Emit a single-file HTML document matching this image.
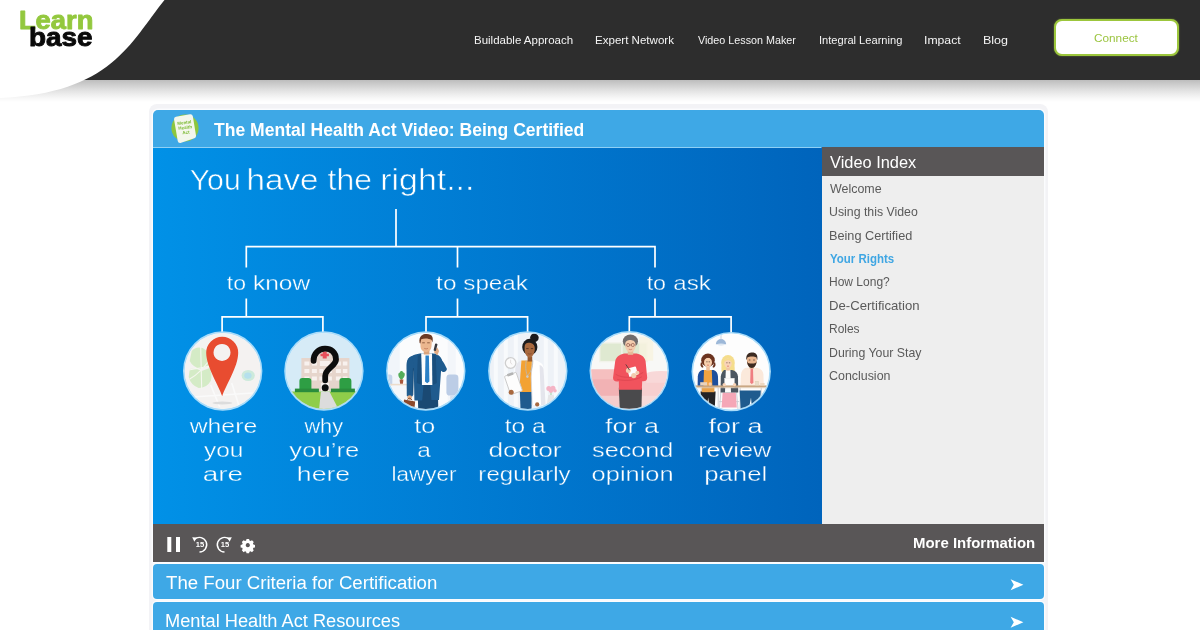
<!DOCTYPE html>
<html lang="en">
<head>
<meta charset="utf-8">
<title>Learnbase – The Mental Health Act Video: Being Certified</title>
<style>
html,body{margin:0;padding:0}
body{position:relative;width:1200px;height:630px;overflow:hidden;background:#fff;font-family:"Liberation Sans",sans-serif}
.t{position:absolute;display:block;margin:0;padding:0;white-space:nowrap;line-height:1;transform-origin:0 0;letter-spacing:0;text-decoration:none;list-style:none}
ul{margin:0;padding:0;list-style:none}
header{position:absolute;left:0;top:0;width:1200px;height:80px;background:#2d2d2d}
.hshadow{position:absolute;left:0;top:80px;width:1200px;height:22px;background:linear-gradient(to bottom,#bdbdbd 0,#cfcfcf 23%,#e0e0e0 45%,#efefef 68%,#f8f8f8 84%,#fff 100%)}
.logo{position:absolute;left:0;top:0;width:220px;height:120px}
.connect{position:absolute;left:1054px;top:19px;width:121px;height:33px;border:2px solid #9cc63c;border-radius:8px;background:#fff;box-shadow:0 0 1.5px rgba(156,198,60,.7)}
.card{position:absolute;left:149px;top:104px;width:899px;height:560px;border-radius:8px;background:#f3f3f6}
.inner{position:absolute;left:153px;top:109.5px;width:891px;height:452.3px;border-radius:5px 5px 0 0;box-shadow:0 0 0 1.4px #fbfcfe}
.titlebar{position:absolute;left:153px;top:109.5px;width:891px;height:38.5px;background:#3ea8e6;border-radius:5px 5px 0 0}
.slide{position:absolute;left:153px;top:147px;width:669px;height:377px}
.side{position:absolute;left:821.5px;top:147px;width:222.5px;height:377px;background:#eeeeee}
.sidehead{position:absolute;left:0;top:0;width:100%;height:29px;background:#595657}
.ctrl{position:absolute;left:153px;top:524px;width:891px;height:38px;background:#595657}
.acc{position:absolute;left:153px;width:891px;height:35px;background:#3ea8e6;border-radius:4px;box-shadow:0 0 0 1.4px #fbfcfe}
.a1{top:564.3px}.a2{top:602.3px}
.ico{position:absolute}
/* own compositing layer => consistent greyscale text antialiasing */
#page{position:absolute;left:0;top:0;width:1200px;height:630px;overflow:hidden;will-change:transform}
</style>
</head>
<body>
<div id="page">

<!-- ============ site header ============ -->
<header>
  <nav>
    <a class="t nav" href="#" style="left:474.08px;top:34.08px;font-size:11.6px;font-weight:400;color:#f4f4f4;transform:scaleX(0.9918)">Buildable Approach</a>
    <a class="t nav" href="#" style="left:595.48px;top:34.08px;font-size:11.6px;font-weight:400;color:#f4f4f4;transform:scaleX(0.9960)">Expert Network</a>
    <a class="t nav" href="#" style="left:698.35px;top:34.08px;font-size:11.6px;font-weight:400;color:#f4f4f4;transform:scaleX(0.9276)">Video Lesson Maker</a>
    <a class="t nav" href="#" style="left:819.00px;top:34.08px;font-size:11.6px;font-weight:400;color:#f4f4f4;transform:scaleX(0.9576)">Integral Learning</a>
    <a class="t nav" href="#" style="left:923.90px;top:34.08px;font-size:11.6px;font-weight:400;color:#f4f4f4;transform:scaleX(1.0539)">Impact</a>
    <a class="t nav" href="#" style="left:982.80px;top:34.08px;font-size:11.6px;font-weight:400;color:#f4f4f4;transform:scaleX(1.0781)">Blog</a>
  </nav>
  <a class="connect" href="#" aria-label="Connect"></a>
  <span class="t btn" style="left:1094.21px;top:32.66px;font-size:10.8px;font-weight:400;color:#9bc43f;transform:scaleX(1.0916)">Connect</span>
</header>
<div class="hshadow"></div>

<svg class="logo" viewBox="0 0 220 120" aria-label="Learnbase">
  <path d="M0,0 H164.5 C130,42.7 111.4,93.3 0,98 Z" fill="#fff"/>
  <g font-family="Liberation Sans, sans-serif" font-weight="700" font-size="25.8" stroke-width="0.9" stroke-linejoin="round" opacity="0.999">
    <text x="18.9" y="29.1" fill="#93c83e" stroke="#93c83e" textLength="74.6" lengthAdjust="spacingAndGlyphs">Learn</text>
    <text x="29.0" y="45.6" fill="#0a0a0a" stroke="#0a0a0a" textLength="63.6" lengthAdjust="spacingAndGlyphs">base</text>
  </g>
</svg>

<!-- ============ lesson card ============ -->
<main>
<div class="card"></div>
<div class="inner"></div>
<div class="titlebar"></div>
<h1 class="t ttl" style="left:214.12px;top:121.16px;font-size:18px;font-weight:700;color:#ffffff;transform:scaleX(0.9743)">The Mental Health Act Video: Being Certified</h1>

<!-- title icon -->
<svg class="ico" style="left:170px;top:113px" width="30" height="30" viewBox="-15 -15 30 30">
  <circle r="13.6" fill="#8cc63f"/>
  <g transform="rotate(-7)">
    <path d="M-7.6,-12.2 L6.6,-13 Q9,-13 9.2,-10.6 L10,8.6 Q10.1,10.8 8,11.4 L-5.6,14.2 Q-8.6,14.6 -8.8,12 L-9.8,-9.6 Q-9.9,-12 -7.6,-12.2 Z" fill="#f4f7ec"/>
    <g font-family="Liberation Sans, sans-serif" font-size="4.5" font-weight="700" fill="#7dba35" text-anchor="middle" opacity="0.999">
      <text x="0" y="-4">Mental</text><text x="0.2" y="1">Health</text><text x="0.4" y="6">Act</text>
    </g>
  </g>
</svg>

<!-- video slide -->
<svg class="slide" viewBox="153 147 669 377" font-family="Liberation Sans, sans-serif">
  <defs>
    <linearGradient id="bg" gradientUnits="userSpaceOnUse" x1="153" y1="0" x2="822" y2="0">
      <stop offset="0" stop-color="#0191e7"/>
      <stop offset="1" stop-color="#0064bc"/>
    </linearGradient>
    <clipPath id="cc"><circle r="38.0"/></clipPath>
  </defs>
  <rect x="153" y="147" width="669" height="378" fill="url(#bg)"/>
  <rect x="153" y="147" width="668.5" height="1" fill="#8fd0f5"/>
<path d="M396,209 V246.6 M246.3,267.5 V246.6 H655.0 V267.5 M457.5,246.6 V267.5 M246.3,298.5 V316.9 M222.1,333 V316.9 H322.9 V333 M457.5,298.5 V316.9 M426.0,333 V316.9 H527.6 V333 M655.0,298.5 V316.9 M629.3,333 V316.9 H731.1 V333" fill="none" stroke="#fff" stroke-width="1.7" stroke-linejoin="miter"/>
  <!-- slide text: stroke is painted with the background gradient to slim the glyphs -->
  <g fill="#fff" stroke="url(#bg)" stroke-linejoin="round">
<text x="189.74" y="190.00" font-size="29.5" stroke-width="0.55" textLength="51.00" lengthAdjust="spacingAndGlyphs">You</text>
<text x="246.47" y="190.00" font-size="29.5" stroke-width="0.55" textLength="72.14" lengthAdjust="spacingAndGlyphs">have</text>
<text x="327.52" y="190.00" font-size="29.5" stroke-width="0.55" textLength="44.42" lengthAdjust="spacingAndGlyphs">the</text>
<text x="380.30" y="190.00" font-size="29.5" stroke-width="0.55" textLength="94.08" lengthAdjust="spacingAndGlyphs">right...</text>
<text x="226.85" y="290.40" font-size="21" stroke-width="0.34" textLength="19.25" lengthAdjust="spacingAndGlyphs">to</text>
<text x="253.01" y="290.40" font-size="21" stroke-width="0.34" textLength="57.18" lengthAdjust="spacingAndGlyphs">know</text>
<text x="436.13" y="290.40" font-size="21" stroke-width="0.34" textLength="20.31" lengthAdjust="spacingAndGlyphs">to</text>
<text x="463.27" y="290.40" font-size="21" stroke-width="0.34" textLength="64.69" lengthAdjust="spacingAndGlyphs">speak</text>
<text x="646.65" y="290.40" font-size="21" stroke-width="0.34" textLength="19.46" lengthAdjust="spacingAndGlyphs">to</text>
<text x="673.23" y="290.40" font-size="21" stroke-width="0.34" textLength="37.59" lengthAdjust="spacingAndGlyphs">ask</text>
<text x="189.65" y="432.60" font-size="20.5" stroke-width="0.34" textLength="67.59" lengthAdjust="spacingAndGlyphs">where</text>
<text x="203.93" y="456.60" font-size="20.5" stroke-width="0.34" textLength="39.47" lengthAdjust="spacingAndGlyphs">you</text>
<text x="202.78" y="480.80" font-size="20.5" stroke-width="0.34" textLength="40.39" lengthAdjust="spacingAndGlyphs">are</text>
<text x="304.40" y="432.60" font-size="20.5" stroke-width="0.34" textLength="38.76" lengthAdjust="spacingAndGlyphs">why</text>
<text x="289.37" y="456.60" font-size="20.5" stroke-width="0.34" textLength="69.85" lengthAdjust="spacingAndGlyphs">you’re</text>
<text x="296.84" y="480.80" font-size="20.5" stroke-width="0.34" textLength="53.30" lengthAdjust="spacingAndGlyphs">here</text>
<text x="414.32" y="432.60" font-size="20.5" stroke-width="0.34" textLength="20.96" lengthAdjust="spacingAndGlyphs">to</text>
<text x="417.22" y="456.60" font-size="20.5" stroke-width="0.34" textLength="13.61" lengthAdjust="spacingAndGlyphs">a</text>
<text x="391.54" y="480.80" font-size="20.5" stroke-width="0.34" textLength="64.90" lengthAdjust="spacingAndGlyphs">lawyer</text>
<text x="504.78" y="432.60" font-size="20.5" stroke-width="0.34" textLength="40.74" lengthAdjust="spacingAndGlyphs">to a</text>
<text x="488.40" y="456.60" font-size="20.5" stroke-width="0.34" textLength="73.26" lengthAdjust="spacingAndGlyphs">doctor</text>
<text x="478.39" y="480.80" font-size="20.5" stroke-width="0.34" textLength="92.27" lengthAdjust="spacingAndGlyphs">regularly</text>
<text x="605.04" y="432.60" font-size="20.5" stroke-width="0.34" textLength="54.13" lengthAdjust="spacingAndGlyphs">for a</text>
<text x="592.14" y="456.60" font-size="20.5" stroke-width="0.34" textLength="81.18" lengthAdjust="spacingAndGlyphs">second</text>
<text x="591.63" y="480.80" font-size="20.5" stroke-width="0.34" textLength="81.97" lengthAdjust="spacingAndGlyphs">opinion</text>
<text x="708.44" y="432.60" font-size="20.5" stroke-width="0.34" textLength="54.13" lengthAdjust="spacingAndGlyphs">for a</text>
<text x="698.20" y="456.60" font-size="20.5" stroke-width="0.34" textLength="73.21" lengthAdjust="spacingAndGlyphs">review</text>
<text x="704.28" y="480.80" font-size="20.5" stroke-width="0.34" textLength="62.89" lengthAdjust="spacingAndGlyphs">panel</text>
  </g>
<g transform="translate(222.7,371.0)">
<circle r="39.7" fill="#a9dcfa"/>
<g clip-path="url(#cc)">
<circle r="38.0" fill="#fff"/>
<!-- map pin -->
<circle r="39" fill="#f4f2f1"/>
<g fill="#d4ebc6">
  <path d="M-31,-20 Q-27,-25 -20,-23 L-13,-18 Q-11,-12 -13,-6 L-22,-2 Q-30,-4 -33,-10 Z"/>
  <path d="M-33,-2 Q-27,-3 -21,0 L-13,-3 Q-10,4 -12,10 Q-16,17 -24,17 Q-32,14 -34,6 Z"/>
</g>
<path d="M-34,-1 L-12,-5 M-22,-24 L-21,18 M-33,8 Q-22,2 -11,-14" fill="none" stroke="#f5f7ef" stroke-width="1.1"/>
<ellipse cx="25.5" cy="4.5" rx="6.6" ry="5.6" fill="#cdeadb"/>
<ellipse cx="25.2" cy="4.6" rx="3.7" ry="3.2" fill="#b5e0ec"/>
<path d="M-12,14 L-3,36 M9,12 L16,34 M-30,26 L30,22" fill="none" stroke="#fafafa" stroke-width="1.6"/>
<ellipse cx="-0.3" cy="32" rx="10" ry="1.5" fill="#dcdcdc"/>
<path fill="#e84c30" fill-rule="evenodd" d="M-0.5,25.2 C-3.5,15 -16.5,-4 -16.5,-18.3 A16,16 0 0 1 15.5,-18.3 C15.5,-4 2.5,15 -0.5,25.2 Z M-0.7,-27.1 a8.5,8.5 0 1 0 0.01,0 Z"/>

</g>
</g>
<g transform="translate(323.9,371.0)">
<circle r="39.7" fill="#a9dcfa"/>
<g clip-path="url(#cc)">
<circle r="38.0" fill="#fff"/>
<!-- hospital + question mark -->
<circle r="39" fill="#d6ebf7"/>
<rect x="-40" y="20.5" width="80" height="20" fill="#8fcd4a"/>
<!-- building -->
<g fill="#e6d5cc">
  <rect x="-22.5" y="-13" width="48" height="33"/>
  <rect x="-9" y="-21" width="20" height="10"/>
</g>
<g fill="#f8f1ee">
  <rect x="-19.5" y="-9.5" width="5" height="4"/><rect x="-12" y="-9.5" width="5" height="4"/><rect x="12" y="-9.5" width="5" height="4"/><rect x="19" y="-9.5" width="4.5" height="4"/>
  <rect x="-19.5" y="-2" width="5" height="4"/><rect x="-12" y="-2" width="5" height="4"/><rect x="-4.5" y="-2" width="4" height="4"/><rect x="4" y="-2" width="4" height="4"/><rect x="12" y="-2" width="5" height="4"/><rect x="19" y="-2" width="4.5" height="4"/>
  <rect x="-19.5" y="5.5" width="5" height="4"/><rect x="-12" y="5.5" width="5" height="4"/><rect x="-4.5" y="5.5" width="4" height="4"/><rect x="4" y="5.5" width="4" height="4"/><rect x="12" y="5.5" width="5" height="4"/><rect x="19" y="5.5" width="4.5" height="4"/>
  <rect x="-4" y="-10" width="10" height="5"/>
  <rect x="-3" y="12" width="8" height="8"/>
</g>
<path d="M-1.2,-19.5 h4 v2.2 h2.2 v2.6 h-2.2 v2.2 h-4 v-2.2 h-2.2 v-2.6 h2.2 Z" fill="#e8505b"/>
<!-- bushes and hedge -->
<g fill="#2e9e44">
  <path d="M-24.5,19 V10 q0,-3 3,-3 h6 q3,0 3,3 V19 Z"/>
  <path d="M15.5,19 V10 q0,-3 3,-3 h6 q3,0 3,3 V19 Z"/>
</g>
<g fill="#2a8c3c">
  <rect x="-29" y="17.6" width="24" height="3.6"/><rect x="7" y="17.6" width="24" height="3.6"/>
</g>
<path d="M-3,20.5 H5.5 L15.5,40 H-5 Z" fill="#dcdcdc"/>
<!-- question mark -->
<path d="M-10.3,-10.2 C-10.6,-26 12.5,-26.5 12.1,-11.4 C12,-5 1.3,-2.5 1.3,5 V9.3" fill="none" stroke="#0d0d0d" stroke-width="5.8" stroke-linecap="round" stroke-linejoin="round"/>
<circle cx="1.3" cy="16.8" r="3.5" fill="#0d0d0d"/>

</g>
</g>
<g transform="translate(425.8,371.0)">
<circle r="39.7" fill="#a9dcfa"/>
<g clip-path="url(#cc)">
<circle r="38.0" fill="#fff"/>
<!-- lawyer -->
<circle r="39" fill="#fbfcfd"/>
<rect x="-40" y="-40" width="14" height="80" fill="#f1f5fa"/>
<rect x="22" y="-40" width="8" height="80" fill="#f3f6fa"/>
<!-- chairs -->
<rect x="20.6" y="3.6" width="12" height="21" rx="3.4" fill="#bccde6"/>
<rect x="24.4" y="24" width="4.4" height="8" fill="#d4dfef"/>
<rect x="-40" y="3.6" width="6.5" height="11" rx="2.5" fill="#c4d4ea"/>
<!-- desk -->
<rect x="-36" y="12.8" width="22" height="1.8" fill="#ecdccb"/>
<rect x="-34" y="14.6" width="18" height="14" fill="#f4f6f9"/>
<!-- plant -->
<path d="M-24.4,9 C-28.5,6 -28,1.5 -25.8,1.6 C-25.6,-0.5 -23,-0.3 -22.6,1.6 C-20.4,1.2 -20,6 -24.4,9 Z" fill="#55ad5a"/>
<path d="M-26.2,8.4 h3.8 l-0.5,4.4 h-2.8 Z" fill="#a8563a"/>
<!-- trousers -->
<path d="M-8.5,12 H12 L12.5,40 H-7.5 Z" fill="#1a4973"/>
<!-- jacket -->
<path d="M-6,-17.5 L7.5,-17.5 C12,-16.5 15.5,-14.5 16,-11 L13.2,29 H5.6 L4.4,13 H-2.2 L-3.6,29.6 H-11.4 L-12,0 L-18.8,-8 C-18.5,-14 -12,-16.5 -6,-17.5 Z" fill="#1f5b8e"/>
<!-- left arm (viewer's left) -->
<path d="M-13.5,-15 C-18,-14 -19.3,-10 -19.3,-5 L-19,25 Q-16,27 -13,25 L-12,-4 Z" fill="#1f5b8e"/>
<path d="M-12.4,-3 L-13,24" stroke="#184a76" stroke-width="0.8" fill="none"/>
<!-- raised arm with phone -->
<path d="M11,-16.5 C14.5,-14 18.5,-8 21,-2.5 C21.5,-0.8 19.5,1.6 17,1 L11.2,-3 L13,-6 L8.6,-18 Z" fill="#1f5b8e"/>
<path d="M8,-19 L11.5,-23.5 L13.3,-20 L11.5,-15.5 Z" fill="#e5ad84"/>
<rect x="8.6" y="-27.5" width="2.4" height="7.4" rx="0.8" fill="#3a3a3f" transform="rotate(14 9.8 -24)"/>
<!-- shirt & tie -->
<path d="M-4.6,-17.6 H6.4 L6.8,14 H-4 Z" fill="#fdfdfd"/>
<path d="M-0.3,-15.6 H3.1 L3.6,10.4 L1.4,12.2 L-0.8,10.4 Z" fill="#2a80c6"/>
<!-- lapels -->
<path d="M-4.8,-17.6 L-4,14 L-9,12 L-8,-15 Z" fill="#1a4f7d"/>
<path d="M6.4,-17.6 L6.8,14 L11,12 L10,-15 Z" fill="#1a4f7d"/>
<!-- neck, head, hair -->
<rect x="-2" y="-21" width="5.6" height="4.5" fill="#dba47c"/>
<path d="M-5.6,-30.5 C-5.6,-35 6,-35 6,-30.5 L5.7,-24.5 C5,-20.3 2.5,-19 0.3,-19 C-2.2,-19 -4.8,-20.3 -5.3,-24.5 Z" fill="#ebb68e"/>
<path d="M-6.2,-28 C-7.5,-36 -2,-37.2 1,-37 C6.5,-37 7.8,-33.5 6.6,-28.5 L5.8,-31 C3,-32.8 -1.5,-33 -4.6,-31.8 L-5.4,-27.5 Z" fill="#6b3a24"/>
<path d="M-3.6,-28.2 h2.6 M1.4,-28.2 h2.6" stroke="#6b3a24" stroke-width="0.7"/>
<path d="M-1.6,-22.6 Q0.3,-21.6 2.2,-22.6" stroke="#b5654a" stroke-width="0.6" fill="none"/>
<!-- hand & briefcase -->
<circle cx="-16.2" cy="26.6" r="2.3" fill="#e5ad84"/>
<path d="M-21.8,28.6 L-10.6,30.4 L-11.4,37.4 L-22.6,35.4 Z" fill="#8c4a2c"/>
<path d="M-18.4,28.6 q2.2,-3 4.6,0.6" fill="none" stroke="#70381f" stroke-width="0.9"/>

</g>
</g>
<g transform="translate(527.8,371.0)">
<circle r="39.7" fill="#a9dcfa"/>
<g clip-path="url(#cc)">
<circle r="38.0" fill="#fff"/>
<!-- doctor -->
<circle r="39" fill="#eef2f7"/>
<g fill="#f8fafc">
  <rect x="-34" y="-40" width="4" height="80"/><rect x="-24" y="-40" width="4" height="80"/><rect x="-14" y="-40" width="4" height="80"/>
  <rect x="16" y="-40" width="4" height="80"/><rect x="26" y="-40" width="4" height="80"/>
</g>
<!-- wall clock -->
<circle cx="-17.2" cy="-8" r="5.3" fill="#fbfbfb" stroke="#cfcfcf" stroke-width="1.3"/>
<path d="M-17.2,-8 V-11.3 M-17.2,-8 L-15.6,-6.8" stroke="#d9d2d2" stroke-width="0.7" fill="none"/>
<!-- flower / vase -->
<path d="M20.5,24 h5.5 l1.6,10 h-8.6 Z" fill="#e6e6e8"/>
<path d="M23.2,24 V19" stroke="#9ccf9a" stroke-width="0.9"/>
<g fill="#f4b4c5"><circle cx="21" cy="17.6" r="2.5"/><circle cx="25.2" cy="17.2" r="2.5"/><circle cx="23.1" cy="19.6" r="2.3"/><circle cx="27.2" cy="19.8" r="1.8"/></g>
<!-- jeans -->
<path d="M-8,20 H4.4 L3.6,40 H-7.2 Z" fill="#1f5b8e"/>
<!-- coat back / left sleeve -->
<path d="M-6.5,-10.4 C-11,-9 -12.4,-5 -12.6,0 L-13.8,18 L-7.4,20.4 L-6.6,3 Z" fill="#e6e7ee"/>
<!-- orange top -->
<path d="M-6.4,-10.5 H7 L7.6,21 H-8.6 Z" fill="#f3a233"/>
<!-- coat right -->
<path d="M4.6,-11.4 C10,-10.4 15.2,-8 15.8,-3 L17.8,34 H4.4 L3.4,6 Z" fill="#ffffff"/><path d="M11.8,-6 C14.6,-5 15.6,-3.4 15.8,-1 L17.8,34 H13.2 Z" fill="#e4e5ec"/>
<path d="M4.6,-11.4 L3.4,6 L4.4,34" fill="none" stroke="#d3d4dc" stroke-width="0.8"/>

<!-- stethoscope -->
<path d="M-1.6,-10.6 C-2.6,-2 -1.6,2 -0.4,4.6 M5,-10.6 C5,-3 3,1 -0.4,4.6" fill="none" stroke="#b9b9b9" stroke-width="0.8"/>
<circle cx="-0.4" cy="5.6" r="1.3" fill="#c9c9c9"/>
<!-- neck, head, hair -->
<rect x="-0.2" y="-14.5" width="4.6" height="5" fill="#96592f"/>
<ellipse cx="2" cy="-24" rx="7.6" ry="8.2" fill="#1b1b1d"/>
<circle cx="6.6" cy="-33.2" r="4.3" fill="#1b1b1d"/>
<path d="M-3.2,-24 C-3.4,-28 0,-29 3,-28 C5.6,-27.4 7.2,-25.4 7,-22 C6.8,-16.6 4,-13.4 2,-13.4 C-0.4,-13.4 -3,-16.6 -3.2,-21 Z" fill="#a8693f"/>
<path d="M-1.6,-22.4 h2.4 M3,-22.4 h2.4" stroke="#3b2417" stroke-width="0.7"/>
<path d="M0,-17.4 Q1.8,-16.4 3.8,-17.4" stroke="#7a3f26" stroke-width="0.6" fill="none"/>
<!-- clipboard -->
<g transform="rotate(-19 -14.5 12.5)">
  <rect x="-20.6" y="2.8" width="12.4" height="19.4" rx="0.8" fill="#fdfdfd" stroke="#cbcbcb" stroke-width="0.9"/>
  <rect x="-17.6" y="1.6" width="6.4" height="2.6" rx="0.6" fill="#b4b4b4"/>
</g>
<circle cx="-16.6" cy="21.2" r="2.5" fill="#a8693f"/>
<circle cx="9.4" cy="33.4" r="2.1" fill="#a8693f"/>

</g>
</g>
<g transform="translate(629.2,370.8)">
<circle r="39.7" fill="#a9dcfa"/>
<g clip-path="url(#cc)">
<circle r="38.0" fill="#fff"/>
<!-- second opinion -->
<circle r="39" fill="#fbf7f6"/>
<rect x="-40" y="-40" width="80" height="40" fill="#f8f8f6"/>
<rect x="-29.5" y="-28" width="47.5" height="18.8" fill="#dfe9d1"/>
<rect x="-29.5" y="-28" width="47.5" height="18.8" fill="none" stroke="#f2f3ea" stroke-width="1.4"/>
<rect x="-8" y="-28" width="1.4" height="18.8" fill="#f2f3ea"/>
<rect x="10" y="-34" width="14" height="24" fill="#f7f3e0" opacity=".8"/>
<!-- sofa -->
<path d="M-40,-1.6 H-14 Q-10,-1.6 -10,2.4 V40 H-40 Z" fill="#f5bfbf"/>
<path d="M-40,8.5 H-10 V40 H-40 Z" fill="#f2b2b4"/>
<path d="M-10,8 H40 V40 H-10 Z" fill="#f7cfcf"/>
<path d="M17,3 Q20,-0.5 40,0.5 V12 H17 Z" fill="#f8d8d8"/>
<path d="M-40,25 H40 V40 H-40 Z" fill="#f8e4e2" opacity=".55"/>
<!-- skirt -->
<path d="M-10.4,17 H12.8 L12.2,40 H-9.4 Z" fill="#4a4a4c"/>
<!-- sweater -->
<path d="M-5,-17.2 H7.4 C12,-16.4 15.4,-13.8 16.4,-9.6 L18,7 C18,10 15.5,11 13,10.4 L12.6,19 H-10.2 L-10.4,10.4 C-13.4,11.4 -16.4,10 -16.2,7 L-14,-9.6 C-13,-13.8 -9.6,-16.4 -5,-17.2 Z" fill="#f1535d"/>
<path d="M-13.5,3.5 C-7,7.5 4,8 14,1.6 M-12,8.6 C-4,10.6 6,9.6 12.6,6" fill="none" stroke="#d9434e" stroke-width="0.7"/>
<!-- notepad & hands -->
<g transform="rotate(-16 3.4 1.4)"><rect x="-1" y="-3.4" width="9" height="8.6" rx="0.8" fill="#fdfdfd"/></g>
<circle cx="-0.8" cy="-0.2" r="2.5" fill="#f3ccae"/>
<circle cx="4.6" cy="4.8" r="2.6" fill="#f3ccae"/>
<circle cx="8.2" cy="2" r="2" fill="#f3ccae"/>
<path d="M-3.4,-6.4 L0.4,-0.6" stroke="#4a3a3a" stroke-width="0.8"/>
<!-- neck, head -->
<rect x="-1.4" y="-20.6" width="5.4" height="4.6" fill="#e6b998"/>
<ellipse cx="1.2" cy="-29.6" rx="7.6" ry="6.8" fill="#716c6c"/>
<path d="M-4,-26.4 C-4,-30.6 0,-31 2.6,-30.6 C5.4,-30.2 6.6,-28.4 6.4,-25 C6.2,-21 3.6,-18.6 1.2,-18.6 C-1.2,-18.6 -3.8,-21 -4,-25 Z" fill="#f3ccae"/>
<g fill="none" stroke="#7a3a34" stroke-width="0.55"><circle cx="-1.1" cy="-25.8" r="1.55"/><circle cx="3.6" cy="-25.8" r="1.55"/><path d="M0.45,-25.8 h1.6"/></g>
<path d="M-0.4,-21.6 Q1.2,-20.8 3,-21.6" stroke="#c06a5a" stroke-width="0.6" fill="none"/>

</g>
</g>
<g transform="translate(731.2,371.6)">
<circle r="39.7" fill="#a9dcfa"/>
<g clip-path="url(#cc)">
<circle r="38.0" fill="#fff"/>
<!-- review panel -->
<circle r="39" fill="#fdfdfd"/>
<!-- lamp -->
<path d="M-15.4,-27.4 C-15,-31 -12.4,-32.6 -10.2,-32.6 C-8,-32.6 -5.4,-31 -5,-27.4 Z" fill="#9db8d8"/>
<rect x="-10.7" y="-40" width="1" height="8" fill="#c5d3e4"/>
<ellipse cx="-10.2" cy="-27" rx="3.4" ry="1.1" fill="#dfe8f2"/>
<!-- table legs / chairs -->
<g stroke="#c9ccd2" stroke-width="0.9" fill="none"><path d="M-30,16 V40 M-13,16 V40 M-10,16 L-12,40 M5,16 L7,40 M9,16 V40 M30,16 V40"/><path d="M-12,30 H8" /></g>
<!-- person 1 -->
<path d="M-30.6,20 H-15.6 L-16.4,36 H-21.8 L-23,26 L-24.4,36 H-29.8 Z" fill="#232325"/><rect x="-29.4" y="15" width="12.6" height="5.6" fill="#e9a24a"/>
<path d="M-29,-1.6 H-17.6 C-14.6,-0.6 -13.4,2 -13.2,5 L-13,15 H-33.6 L-33.4,5 C-33.2,2 -32,-0.6 -29,-1.6 Z" fill="#1f4f9c"/>
<path d="M-27.2,-1.6 H-19.4 L-18.8,15 H-27.8 Z" fill="#f3a341"/>
<rect x="-25" y="-4.6" width="3.6" height="3.6" fill="#eebf9c"/>
<ellipse cx="-23.2" cy="-11.4" rx="6.8" ry="6.6" fill="#6c3420"/>
<path d="M-29.6,-9 q-1,4 1.6,4.4 M-16.8,-9 q1,4 -1.6,4.4" fill="#6c3420" stroke="#6c3420" stroke-width="1.6"/>
<ellipse cx="-23.2" cy="-9.2" rx="4" ry="4.8" fill="#f7ceac"/>
<path d="M-27.4,-12 Q-23,-15.6 -19,-12 L-19.4,-14.4 Q-23,-17 -27,-14.4 Z" fill="#6c3420"/>
<path d="M-25,-9.8 h1.4 M-22.6,-9.8 h1.4" stroke="#3a2a25" stroke-width="0.6"/>
<path d="M-24.2,-6.6 q1,0.6 2,0" stroke="#d0574f" stroke-width="0.6" fill="none"/>
<!-- person 2 -->
<path d="M-8.6,21 H4.6 L5.6,36 H-9.6 Z" fill="#f5a7b7"/>
<ellipse cx="-3.2" cy="-8.6" rx="6.8" ry="8" fill="#f5dd8c"/>
<path d="M-9.6,-6 Q-10.6,0.5 -8,2 H1.6 Q4.4,0.5 3.2,-6 Z" fill="#f5dd8c"/>
<path d="M-7,-1.6 H0.8 C4.4,-0.8 6.6,1.4 6.8,5 L7,21 H-10.6 L-10.4,5 C-10.2,1.4 -8,-0.8 -7,-1.6 Z" fill="#4b5661"/>
<path d="M-5.4,-1.6 H-0.8 L-0.2,21 H-6.2 Z" fill="#fbfbfb"/>
<rect x="-5" y="-4.6" width="3.6" height="3.6" fill="#f0c6a6"/>
<ellipse cx="-3.2" cy="-8.4" rx="3.8" ry="4.8" fill="#f9d4b8"/>
<path d="M-7.2,-9.6 Q-5.6,-14 -1,-12.6 Q1,-11.6 0.8,-9 Q-1,-12 -4,-11.4 Q-6.4,-11 -7.2,-9.6 Z" fill="#f5dd8c"/>
<path d="M-5,-8.8 h1.4 M-2.4,-8.8 h1.4" stroke="#5a4238" stroke-width="0.6"/>
<path d="M-4.2,-5.6 q1,0.6 2,0" stroke="#d0574f" stroke-width="0.6" fill="none"/>
<rect x="-6.6" y="6.6" width="9.8" height="9" fill="#fdfdfd" stroke="#e3e3e3" stroke-width="0.4"/>
<!-- person 3 -->
<path d="M8.4,19 H29.6 L28.6,40 H21 L19.8,26 L17.2,40 H9.6 Z" fill="#1f5b8e"/>
<path d="M14.6,-3.8 H26 C30,-2.8 32,-0.2 32.2,3 L32.6,15 H9.2 L9.8,3 C10,-0.2 12,-2.8 14.6,-3.8 Z" fill="#fbe9db"/>
<path d="M19.4,-3.2 H21.8 L22.2,11 L20.6,12.6 L19,11 Z" fill="#ef7f82"/>
<rect x="18.4" y="-6.4" width="4.2" height="3.4" fill="#dba884"/>
<path d="M15.6,-13 C15.6,-17 25.6,-17 25.6,-13 L25.4,-9 C25,-5.6 22.6,-4.2 20.6,-4.2 C18.6,-4.2 16.2,-5.6 15.8,-9 Z" fill="#e9b791"/>
<path d="M15.2,-11.4 C14.2,-18.6 19,-19.2 20.8,-19.2 C25,-19.2 27,-16.6 26,-11.4 L25.2,-14 C23,-15.4 18.6,-15.4 16.2,-14 Z" fill="#3b2a21"/>
<path d="M15.8,-10.6 C16,-6.4 18,-3.6 20.6,-3.6 C23.2,-3.6 25.2,-6.4 25.4,-10.6 L24.4,-8.6 Q20.6,-7.4 16.8,-8.6 Z" fill="#3b2a21"/>
<path d="M17.6,-11.6 h1.6 M22,-11.6 h1.6" stroke="#2a1d17" stroke-width="0.6"/>
<!-- table -->
<rect x="-40" y="13.8" width="80" height="2" fill="#c9a783"/>
<rect x="-40" y="15.8" width="80" height="0.8" fill="#e3cdb6"/>
<!-- things on table -->
<rect x="-31" y="10.6" width="7" height="3.2" fill="#e9d3bd"/>
<rect x="24.4" y="9.6" width="3" height="4.2" fill="#e8dcc8" stroke="#d9c9ae" stroke-width="0.4"/>
<rect x="29" y="11.4" width="4.4" height="2.4" fill="#eed9c2"/>
<circle cx="-21" cy="12.4" r="1.7" fill="#f7ceac"/><circle cx="-7" cy="13" r="1.6" fill="#f9d4b8"/><circle cx="3.4" cy="13" r="1.6" fill="#f9d4b8"/>

</g>
</g>
</svg>

<!-- video index -->
<aside class="side"><div class="sidehead"></div></aside>
<h2 class="t vih" style="left:829.92px;top:155.06px;font-size:16px;font-weight:400;color:#ffffff;transform:scaleX(1.0238)">Video Index</h2>
<ul>
    <li class="t vi" style="left:829.74px;top:181.70px;font-size:13px;font-weight:400;color:#5a5a5a;transform:scaleX(0.9567)">Welcome</li>
    <li class="t vi" style="left:828.88px;top:205.10px;font-size:13px;font-weight:400;color:#5a5a5a;transform:scaleX(0.9470)">Using this Video</li>
    <li class="t vi" style="left:828.78px;top:228.50px;font-size:13px;font-weight:400;color:#5a5a5a;transform:scaleX(0.9772)">Being Certified</li>
    <li class="t vi on" style="left:829.57px;top:251.90px;font-size:13px;font-weight:700;color:#3fa6e3;transform:scaleX(0.8833)">Your Rights</li>
    <li class="t vi" style="left:828.84px;top:275.30px;font-size:13px;font-weight:400;color:#5a5a5a;transform:scaleX(0.9238)">How Long?</li>
    <li class="t vi" style="left:828.75px;top:298.70px;font-size:13px;font-weight:400;color:#5a5a5a;transform:scaleX(1.0104)">De-Certification</li>
    <li class="t vi" style="left:828.84px;top:322.10px;font-size:13px;font-weight:400;color:#5a5a5a;transform:scaleX(0.9202)">Roles</li>
    <li class="t vi" style="left:828.81px;top:345.50px;font-size:13px;font-weight:400;color:#5a5a5a;transform:scaleX(0.9478)">During Your Stay</li>
    <li class="t vi" style="left:829.18px;top:368.90px;font-size:13px;font-weight:400;color:#5a5a5a;transform:scaleX(0.9554)">Conclusion</li>
</ul>

<!-- player controls -->
<div class="ctrl"></div>
<span class="t mi" style="left:913.43px;top:535.00px;font-size:15px;font-weight:700;color:#ffffff;transform:scaleX(0.9975)">More Information</span>

<!-- control icons -->
<svg class="ico" style="left:160px;top:530px" width="110" height="30" viewBox="160 530 110 30" fill="none" stroke="#fff">
  <path d="M169.3,537 V552 M178,537 V552" stroke-width="4"/>
  <g stroke-width="1.45">
    <path d="M194.6,539.2 A7.3,7.3 0 1 1 199.5,552"/>
    <path d="M192.2,537.3 L196.8,537.6 L194.4,541.8 Z" fill="#fff" stroke="none"/>
    <path d="M229.4,539.2 A7.3,7.3 0 1 0 224.5,552"/>
    <path d="M231.8,537.3 L227.2,537.6 L229.6,541.8 Z" fill="#fff" stroke="none"/>
  </g>
  <g font-family="Liberation Sans, sans-serif" font-weight="700" font-size="7.6" fill="#fff" stroke="none" text-anchor="middle" opacity="0.999">
    <text x="200.1" y="547.3">15</text><text x="225" y="547.3">15</text>
  </g>
  <g transform="translate(247.8,545.2) scale(0.84)" stroke="none" fill="#fff">
    <path id="gear" fill-rule="evenodd" d="M-1.5,-7.4 h3 l0.5,1.9 l1.3,0.55 l1.7,-1 l2.1,2.1 l-1,1.7 l0.55,1.3 l1.9,0.5 v3 l-1.9,0.5 l-0.55,1.3 l1,1.7 l-2.1,2.1 l-1.7,-1 l-1.3,0.55 l-0.5,1.9 h-3 l-0.5,-1.9 l-1.3,-0.55 l-1.7,1 l-2.1,-2.1 l1,-1.7 l-0.55,-1.3 l-1.9,-0.5 v-3 l1.9,-0.5 l0.55,-1.3 l-1,-1.7 l2.1,-2.1 l1.7,1 l1.3,-0.55 Z M0,-2.5 a2.5,2.5 0 1 0 0.01,0 Z"/>
  </g>
</svg>

<!-- accordions -->
<section class="acc a1"></section>
<h3 class="t acct" style="left:165.63px;top:574.06px;font-size:18px;font-weight:400;color:#ffffff;transform:scaleX(1.0351)">The Four Criteria for Certification</h3>
<section class="acc a2"></section>
<h3 class="t acct" style="left:164.54px;top:612.16px;font-size:18px;font-weight:400;color:#ffffff;transform:scaleX(1.0128)">Mental Health Act Resources</h3>
<svg class="ico" style="left:1008px;top:575px" width="20" height="55" viewBox="1008 575 20 55" fill="#fff">
  <path d="M1010.6,579.2 L1023.4,584.7 L1010.6,590.2 L1013.8,584.7 Z"/>
  <path d="M1010.6,616.7 L1023.4,622.2 L1010.6,627.7 L1013.8,622.2 Z"/>
</svg>

</main>
</div>

</body>
</html>
